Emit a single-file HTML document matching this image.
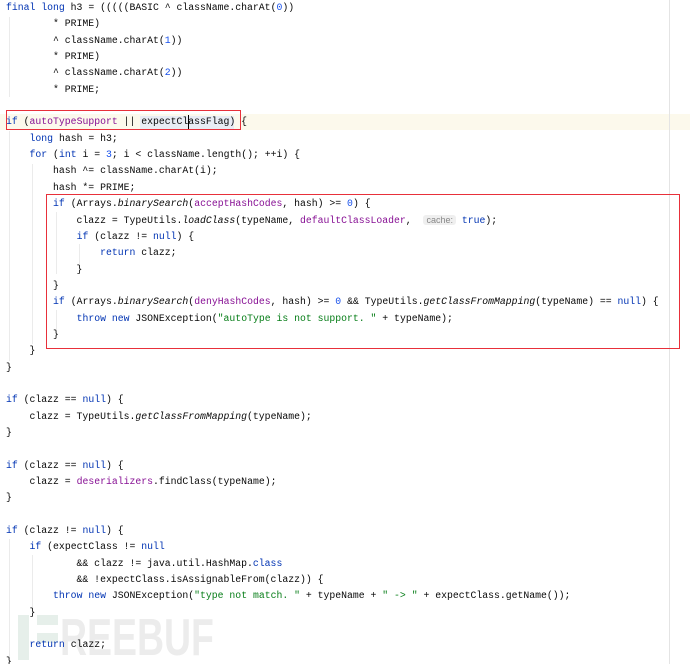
<!DOCTYPE html>
<html><head><meta charset="utf-8"><style>
html,body{margin:0;padding:0;background:#fff;width:690px;height:664px;overflow:hidden;position:relative}
.code{position:absolute;left:6px;top:0;font-family:"Liberation Mono",monospace;font-size:9.8px;color:#080808}
.l{height:16.35px;line-height:16.35px;white-space:pre}
.k{color:#0033b3}.f{color:#871094}.n{color:#1750eb}.s{color:#067d17}.i{font-style:italic}
.hint{font-family:"Liberation Sans",sans-serif;font-size:9px;color:#888;background:#efefef;border-radius:3px;padding:0 3px}
.box{position:absolute;border:1.5px solid #e8303a;box-sizing:border-box}
.vl{position:absolute;width:1px;background:#ebebeb}
</style></head><body>
<div style="position:absolute;left:0;top:114px;width:690px;height:16px;background:#fcf9ec"></div>
<div class="vl" style="left:669px;top:0;height:664px;background:#e4e4e4"></div>
<div class="vl" style="left:9px;top:17px;height:80px"></div>
<div class="vl" style="left:9px;top:131px;height:230px"></div>
<div class="vl" style="left:32px;top:164px;height:180px"></div>
<div class="vl" style="left:56px;top:212px;height:62px"></div>
<div class="vl" style="left:79px;top:244px;height:20px"></div>
<div class="vl" style="left:56px;top:310px;height:20px"></div>
<div class="vl" style="left:9px;top:539px;height:120px"></div>
<div class="vl" style="left:32px;top:555px;height:60px"></div>
<div style="position:absolute;left:18px;top:615px;width:11px;height:45px;background:#e6efea"></div>
<div style="position:absolute;left:37px;top:615px;width:21px;height:10px;background:#e6efea"></div>
<div style="position:absolute;left:37px;top:633px;width:21px;height:10px;background:#e6efea"></div>
<div style="position:absolute;left:60px;top:610px;font-family:'Liberation Sans',sans-serif;font-weight:bold;font-size:52px;color:#ececec;line-height:56px;transform:scaleX(0.72);transform-origin:0 0">REEBUF</div>
<div style="position:absolute;left:140px;top:116px;width:94px;height:13px;background:#e8ecf4"></div>
<div style="position:absolute;left:188px;top:115px;width:1px;height:15px;background:#000"></div>
<div class="code"><div class="l"><span class="k">final long</span> h3 = (((((BASIC ^ className.charAt(<span class="n">0</span>))</div><div class="l">        * PRIME)</div><div class="l">        ^ className.charAt(<span class="n">1</span>))</div><div class="l">        * PRIME)</div><div class="l">        ^ className.charAt(<span class="n">2</span>))</div><div class="l">        * PRIME;</div><div class="l"> </div><div class="l"><span class="k">if</span> (<span class="f">autoTypeSupport</span> || expectClassFlag) {</div><div class="l">    <span class="k">long</span> hash = h3;</div><div class="l">    <span class="k">for</span> (<span class="k">int</span> i = <span class="n">3</span>; i &lt; className.length(); ++i) {</div><div class="l">        hash ^= className.charAt(i);</div><div class="l">        hash *= PRIME;</div><div class="l">        <span class="k">if</span> (Arrays.<span class="i">binarySearch</span>(<span class="f">acceptHashCodes</span>, hash) &gt;= <span class="n">0</span>) {</div><div class="l">            clazz = TypeUtils.<span class="i">loadClass</span>(typeName, <span class="f">defaultClassLoader</span>,  <span class="hint">cache:</span> <span class="k">true</span>);</div><div class="l">            <span class="k">if</span> (clazz != <span class="k">null</span>) {</div><div class="l">                <span class="k">return</span> clazz;</div><div class="l">            }</div><div class="l">        }</div><div class="l">        <span class="k">if</span> (Arrays.<span class="i">binarySearch</span>(<span class="f">denyHashCodes</span>, hash) &gt;= <span class="n">0</span> &amp;&amp; TypeUtils.<span class="i">getClassFromMapping</span>(typeName) == <span class="k">null</span>) {</div><div class="l">            <span class="k">throw new</span> JSONException(<span class="s">"autoType is not support. "</span> + typeName);</div><div class="l">        }</div><div class="l">    }</div><div class="l">}</div><div class="l"> </div><div class="l"><span class="k">if</span> (clazz == <span class="k">null</span>) {</div><div class="l">    clazz = TypeUtils.<span class="i">getClassFromMapping</span>(typeName);</div><div class="l">}</div><div class="l"> </div><div class="l"><span class="k">if</span> (clazz == <span class="k">null</span>) {</div><div class="l">    clazz = <span class="f">deserializers</span>.findClass(typeName);</div><div class="l">}</div><div class="l"> </div><div class="l"><span class="k">if</span> (clazz != <span class="k">null</span>) {</div><div class="l">    <span class="k">if</span> (expectClass != <span class="k">null</span></div><div class="l">            &amp;&amp; clazz != java.util.HashMap.<span class="k">class</span></div><div class="l">            &amp;&amp; !expectClass.isAssignableFrom(clazz)) {</div><div class="l">        <span class="k">throw new</span> JSONException(<span class="s">"type not match. "</span> + typeName + <span class="s">" -&gt; "</span> + expectClass.getName());</div><div class="l">    }</div><div class="l"> </div><div class="l">    <span class="k">return</span> clazz;</div><div class="l">}</div></div>
<div class="box" style="left:6px;top:110px;width:235px;height:20px"></div>
<div class="box" style="left:46px;top:194px;width:634px;height:155px"></div>
</body></html>
